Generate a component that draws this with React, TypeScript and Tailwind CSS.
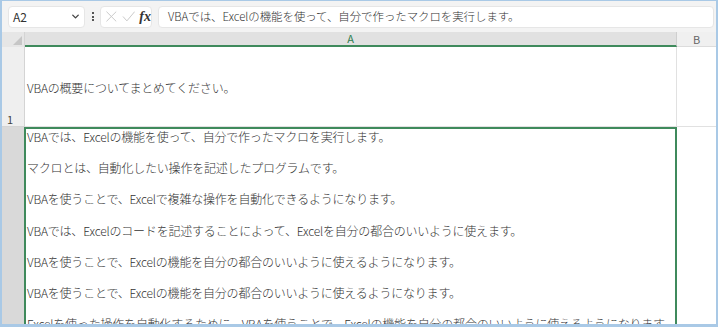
import { ChevronDown } from "lucide-react";

const font = { fontFamily: '"Noto Sans CJK JP", "Noto Sans", sans-serif' };

const lines = [
  "VBAでは、Excelの機能を使って、自分で作ったマクロを実行します。",
  "マクロとは、自動化したい操作を記述したプログラムです。",
  "VBAを使うことで、Excelで複雑な操作を自動化できるようになります。",
  "VBAでは、Excelのコードを記述することによって、Excelを自分の都合のいいように使えます。",
  "VBAを使うことで、Excelの機能を自分の都合のいいように使えるようになります。",
  "VBAを使うことで、Excelの機能を自分の都合のいいように使えるようになります。",
  "Excelを使った操作を自動化するために、VBAを使うことで、Excelの機能を自分の都合のいいように使えるようになります。",
];

const App = () => {
  return (
    <div
      className="w-[718px] h-[327px] overflow-hidden flex flex-col bg-white border-l-[2px] border-r-[2px] border-b-[3px] border-t border-[#a9c9e6]"
      style={font}
    >
      {/* formula bar */}
      <div className="h-[31px] shrink-0 bg-[#f3f3f3] flex items-center">
        <div className="ml-[6px] w-[77px] h-[22px] bg-white rounded-[4px] border border-[#e6e6e6] flex items-center justify-between pl-[4px] pr-[3px]">
          <span className="text-[12px] text-[#333]">A2</span>
          <ChevronDown size={11} strokeWidth={3} className="text-[#444]" />
        </div>
        <div className="w-[15px] flex flex-col items-center gap-[1.5px]">
          <span className="w-[2px] h-[2px] bg-[#555]" />
          <span className="w-[2px] h-[2px] bg-[#555]" />
          <span className="w-[2px] h-[2px] bg-[#555]" />
        </div>
        <div className="w-[52px] h-[22px] bg-white rounded-[4px] border border-[#e6e6e6] flex items-center pl-[4px] gap-[4px]">
          <svg width="13" height="13" viewBox="0 0 13 13" fill="none" stroke="#c8c8c8" strokeWidth="1">
            <path d="M1.5 1.5l10 10M11.5 1.5l-10 10" />
          </svg>
          <svg width="14" height="13" viewBox="0 0 14 13" fill="none" stroke="#c8c8c8" strokeWidth="1">
            <path d="M1 6.5l4 4.5 8-9.5" />
          </svg>
          <span
            className="text-[14px] italic font-bold text-[#333] leading-none"
            style={{ fontFamily: '"Liberation Serif", serif' }}
          >
            fx
          </span>
        </div>
        <div className="ml-[6px] flex-1 mr-[2px] h-[22px] bg-white rounded-[4px] border border-[#e6e6e6] flex items-center pl-[9px]">
          <span className="text-[11.4px] font-light text-[#333]">{lines[0]}</span>
        </div>
      </div>

      {/* column headers */}
      <div className="h-[15px] shrink-0 flex bg-[#f3f3f3]">
        <div className="w-[23px] bg-[#e6e6e6] border-r border-[#d4d4d4] relative">
          <svg className="absolute right-[2px] bottom-[2px]" width="9" height="9" viewBox="0 0 9 9">
            <path d="M9 0v9H0z" fill="#c6c6c6" />
          </svg>
        </div>
        <div className="w-[652px] bg-[#e1e1e1] border-b-[2px] border-[#3f8a5c] border-r border-r-[#cfcfcf] flex items-center justify-center">
          <span className="text-[11px] text-[#2e7d4f] leading-none">A</span>
        </div>
        <div className="flex-1 bg-[#f0f0f0] border-b border-[#dcdcdc] flex items-center justify-center">
          <span className="text-[11px] text-[#666] leading-none">B</span>
        </div>
      </div>

      {/* row 1 */}
      <div className="h-[80px] shrink-0 flex">
        <div className="w-[23px] bg-[#efefef] border-r border-b border-[#d4d4d4] flex items-end pl-[5px] pb-[1px]">
          <span className="text-[11px] text-[#444] leading-none">1</span>
        </div>
        <div className="w-[652px] border-r border-b border-[#e1e1e1] flex items-center pl-[2px] pt-[2px]">
          <span className="text-[12px] font-light text-[#333] tracking-[-0.2px]">VBAの概要についてまとめてください。</span>
        </div>
        <div className="flex-1 border-b border-[#e1e1e1]" />
      </div>

      {/* row 2 */}
      <div className="flex-1 flex">
        <div className="w-[23px] bg-[#d9d9d9] border-r border-[#c8c8c8]" />
        <div className="w-[653px] -ml-[1px] border-l-[2px] border-r-[2px] border-t-[2px] border-[#3f8a5c] pl-[1px] text-[12px] font-light leading-[15.6px] text-[#333] tracking-[-0.2px] whitespace-nowrap overflow-hidden">
          {lines.map((l, i) => (
            <div key={i}>
              <div>{l}</div>
              {i < lines.length - 1 && <div>&nbsp;</div>}
            </div>
          ))}
        </div>
        <div className="flex-1" />
      </div>
    </div>
  );
};

export default App;
